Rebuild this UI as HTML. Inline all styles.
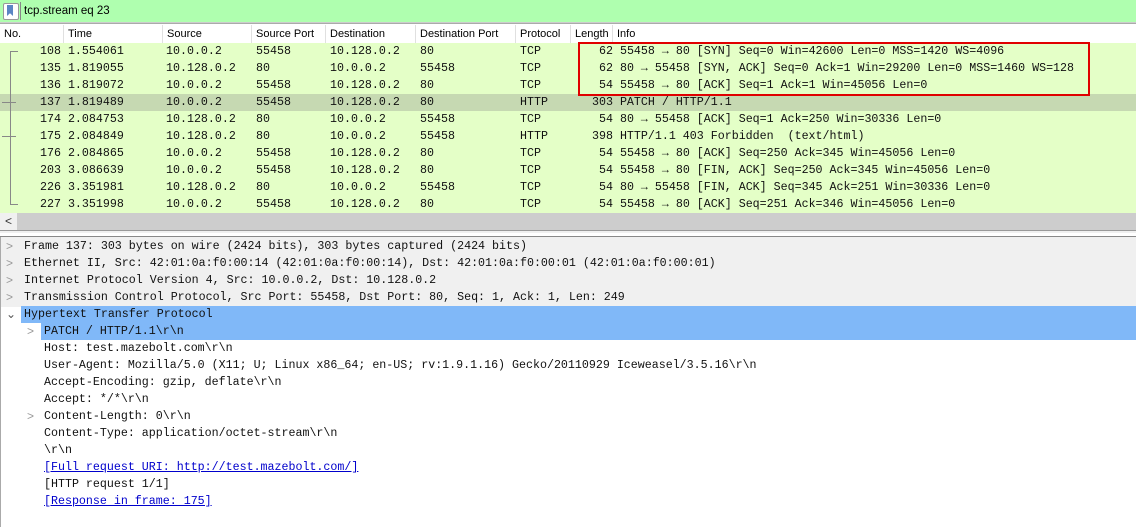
<!DOCTYPE html>
<html><head><style>
body{margin:0;width:1136px;height:527px;overflow:hidden;background:#fff;position:relative;font-family:"Liberation Sans",sans-serif}
.a{position:absolute;white-space:pre}
.r{position:absolute;left:0;width:1136px;height:17px;background:#e4ffc7}
.r span{position:absolute;top:2px;white-space:pre;font-family:"Liberation Mono",monospace;font-size:11.65px;color:#111}
.h{position:absolute;top:25px;height:18px;font-size:11px;color:#000;padding-left:4px;line-height:18px;border-right:1px solid #e0e0e0;box-sizing:border-box}
.d{position:absolute;left:0;width:1136px;height:17px}
.d span{position:absolute;top:2px;white-space:pre;font-family:"Liberation Mono",monospace;font-size:11.65px;color:#111}
.ar{color:#999!important;font-family:"Liberation Sans",sans-serif!important;font-size:12px!important;top:1px!important}
.lk{color:#00c!important;text-decoration:underline}
</style></head><body>
<div class="a" style="left:0;top:0;width:1136px;height:22px;background:#afffaf;border-bottom:1px solid #ccc"></div>
<div class="a" style="left:3px;top:3px;width:14px;height:15px;background:#fff;border:1px solid #999;border-radius:2px"></div>
<div class="a" style="left:7px;top:5px;width:6px;height:11px;background:#5b86c4;clip-path:polygon(0 0,100% 0,100% 100%,50% 75%,0 100%)"></div>
<div class="a" style="left:20px;top:2px;width:1px;height:18px;background:#888"></div>
<div class="a" style="left:24px;top:5px;font-size:11.5px">tcp.stream eq 23</div>
<div class="a" style="left:0;top:23px;width:1136px;height:20px;background:#fff;border-top:1px solid #aaa"></div>
<div class="h" style="left:0;width:64px">No.</div>
<div class="h" style="left:64px;width:99px">Time</div>
<div class="h" style="left:163px;width:89px">Source</div>
<div class="h" style="left:252px;width:74px">Source Port</div>
<div class="h" style="left:326px;width:90px">Destination</div>
<div class="h" style="left:416px;width:100px">Destination Port</div>
<div class="h" style="left:516px;width:55px">Protocol</div>
<div class="h" style="left:571px;width:42px">Length</div>
<div class="h" style="left:613px;width:300px;border:0">Info</div>

<div class="r" style="top:43px"><span style="left:40px">108 1.554061</span><span style="left:166px">10.0.0.2</span><span style="left:256px">55458</span><span style="left:330px">10.128.0.2</span><span style="left:420px">80</span><span style="left:520px">TCP</span><span style="left:599px">62 55458 → 80 [SYN] Seq=0 Win=42600 Len=0 MSS=1420 WS=4096</span></div>
<div class="r" style="top:60px"><span style="left:40px">135 1.819055</span><span style="left:166px">10.128.0.2</span><span style="left:256px">80</span><span style="left:330px">10.0.0.2</span><span style="left:420px">55458</span><span style="left:520px">TCP</span><span style="left:599px">62 80 → 55458 [SYN, ACK] Seq=0 Ack=1 Win=29200 Len=0 MSS=1460 WS=128</span></div>
<div class="r" style="top:77px"><span style="left:40px">136 1.819072</span><span style="left:166px">10.0.0.2</span><span style="left:256px">55458</span><span style="left:330px">10.128.0.2</span><span style="left:420px">80</span><span style="left:520px">TCP</span><span style="left:599px">54 55458 → 80 [ACK] Seq=1 Ack=1 Win=45056 Len=0</span></div>
<div class="r" style="top:94px;background:#c6d9b2"><span style="left:40px">137 1.819489</span><span style="left:166px">10.0.0.2</span><span style="left:256px">55458</span><span style="left:330px">10.128.0.2</span><span style="left:420px">80</span><span style="left:520px">HTTP</span><span style="left:592px">303 PATCH / HTTP/1.1</span></div>
<div class="r" style="top:111px"><span style="left:40px">174 2.084753</span><span style="left:166px">10.128.0.2</span><span style="left:256px">80</span><span style="left:330px">10.0.0.2</span><span style="left:420px">55458</span><span style="left:520px">TCP</span><span style="left:599px">54 80 → 55458 [ACK] Seq=1 Ack=250 Win=30336 Len=0</span></div>
<div class="r" style="top:128px"><span style="left:40px">175 2.084849</span><span style="left:166px">10.128.0.2</span><span style="left:256px">80</span><span style="left:330px">10.0.0.2</span><span style="left:420px">55458</span><span style="left:520px">HTTP</span><span style="left:592px">398 HTTP/1.1 403 Forbidden  (text/html)</span></div>
<div class="r" style="top:145px"><span style="left:40px">176 2.084865</span><span style="left:166px">10.0.0.2</span><span style="left:256px">55458</span><span style="left:330px">10.128.0.2</span><span style="left:420px">80</span><span style="left:520px">TCP</span><span style="left:599px">54 55458 → 80 [ACK] Seq=250 Ack=345 Win=45056 Len=0</span></div>
<div class="r" style="top:162px"><span style="left:40px">203 3.086639</span><span style="left:166px">10.0.0.2</span><span style="left:256px">55458</span><span style="left:330px">10.128.0.2</span><span style="left:420px">80</span><span style="left:520px">TCP</span><span style="left:599px">54 55458 → 80 [FIN, ACK] Seq=250 Ack=345 Win=45056 Len=0</span></div>
<div class="r" style="top:179px"><span style="left:40px">226 3.351981</span><span style="left:166px">10.128.0.2</span><span style="left:256px">80</span><span style="left:330px">10.0.0.2</span><span style="left:420px">55458</span><span style="left:520px">TCP</span><span style="left:599px">54 80 → 55458 [FIN, ACK] Seq=345 Ack=251 Win=30336 Len=0</span></div>
<div class="r" style="top:196px"><span style="left:40px">227 3.351998</span><span style="left:166px">10.0.0.2</span><span style="left:256px">55458</span><span style="left:330px">10.128.0.2</span><span style="left:420px">80</span><span style="left:520px">TCP</span><span style="left:599px">54 55458 → 80 [ACK] Seq=251 Ack=346 Win=45056 Len=0</span></div>
<div class="a" style="left:10px;top:51px;width:1px;height:154px;background:#888"></div>
<div class="a" style="left:10px;top:51px;width:8px;height:1px;background:#888"></div>
<div class="a" style="left:10px;top:204px;width:8px;height:1px;background:#888"></div>
<div class="a" style="left:2px;top:102px;width:14px;height:1px;background:#888"></div>
<div class="a" style="left:2px;top:136px;width:14px;height:1px;background:#888"></div>
<div class="a" style="left:578px;top:42px;width:508px;height:50px;border:2px solid #e00000"></div>
<div class="a" style="left:0;top:213px;width:1136px;height:17px;background:#cdcdcd"></div>
<div class="a" style="left:0;top:213px;width:17px;height:17px;background:#f0f0f0;font-size:12px;text-align:center;line-height:17px;color:#333">&lt;</div>
<div class="a" style="left:0;top:230px;width:1136px;height:2px;background:#f0f0f0;border-top:1px solid #999"></div>
<div class="a" style="left:0;top:236px;width:1136px;height:70px;background:#f0f0f0;border-top:1px solid #888"></div>
<div class="a" style="left:0;top:237px;width:1px;height:290px;background:#aaa"></div>

<div class="d" style="top:238px"><span class="ar" style="left:6px">&gt;</span><span style="left:24px">Frame 137: 303 bytes on wire (2424 bits), 303 bytes captured (2424 bits)</span></div>
<div class="d" style="top:255px"><span class="ar" style="left:6px">&gt;</span><span style="left:24px">Ethernet II, Src: 42:01:0a:f0:00:14 (42:01:0a:f0:00:14), Dst: 42:01:0a:f0:00:01 (42:01:0a:f0:00:01)</span></div>
<div class="d" style="top:272px"><span class="ar" style="left:6px">&gt;</span><span style="left:24px">Internet Protocol Version 4, Src: 10.0.0.2, Dst: 10.128.0.2</span></div>
<div class="d" style="top:289px"><span class="ar" style="left:6px">&gt;</span><span style="left:24px">Transmission Control Protocol, Src Port: 55458, Dst Port: 80, Seq: 1, Ack: 1, Len: 249</span></div>
<div class="d" style="top:306px;left:21px;width:1115px;background:#80b8f8"><span class="ar" style="left:-15px;color:#555!important">⌄</span><span style="left:3px">Hypertext Transfer Protocol</span></div>
<div class="d" style="top:323px;left:41px;width:1095px;background:#80b8f8"></div>
<div class="d" style="top:323px"><span class="ar" style="left:27px">&gt;</span><span style="left:44px">PATCH / HTTP/1.1\r\n</span></div>
<div class="d" style="top:340px"><span style="left:44px">Host: test.mazebolt.com\r\n</span></div>
<div class="d" style="top:357px"><span style="left:44px">User-Agent: Mozilla/5.0 (X11; U; Linux x86_64; en-US; rv:1.9.1.16) Gecko/20110929 Iceweasel/3.5.16\r\n</span></div>
<div class="d" style="top:374px"><span style="left:44px">Accept-Encoding: gzip, deflate\r\n</span></div>
<div class="d" style="top:391px"><span style="left:44px">Accept: */*\r\n</span></div>
<div class="d" style="top:408px"><span class="ar" style="left:27px">&gt;</span><span style="left:44px">Content-Length: 0\r\n</span></div>
<div class="d" style="top:425px"><span style="left:44px">Content-Type: application/octet-stream\r\n</span></div>
<div class="d" style="top:442px"><span style="left:44px">\r\n</span></div>
<div class="d" style="top:459px"><span class="lk" style="left:44px">[Full request URI: http://test.mazebolt.com/]</span></div>
<div class="d" style="top:476px"><span style="left:44px">[HTTP request 1/1]</span></div>
<div class="d" style="top:493px"><span class="lk" style="left:44px">[Response in frame: 175]</span></div>
</body></html>
